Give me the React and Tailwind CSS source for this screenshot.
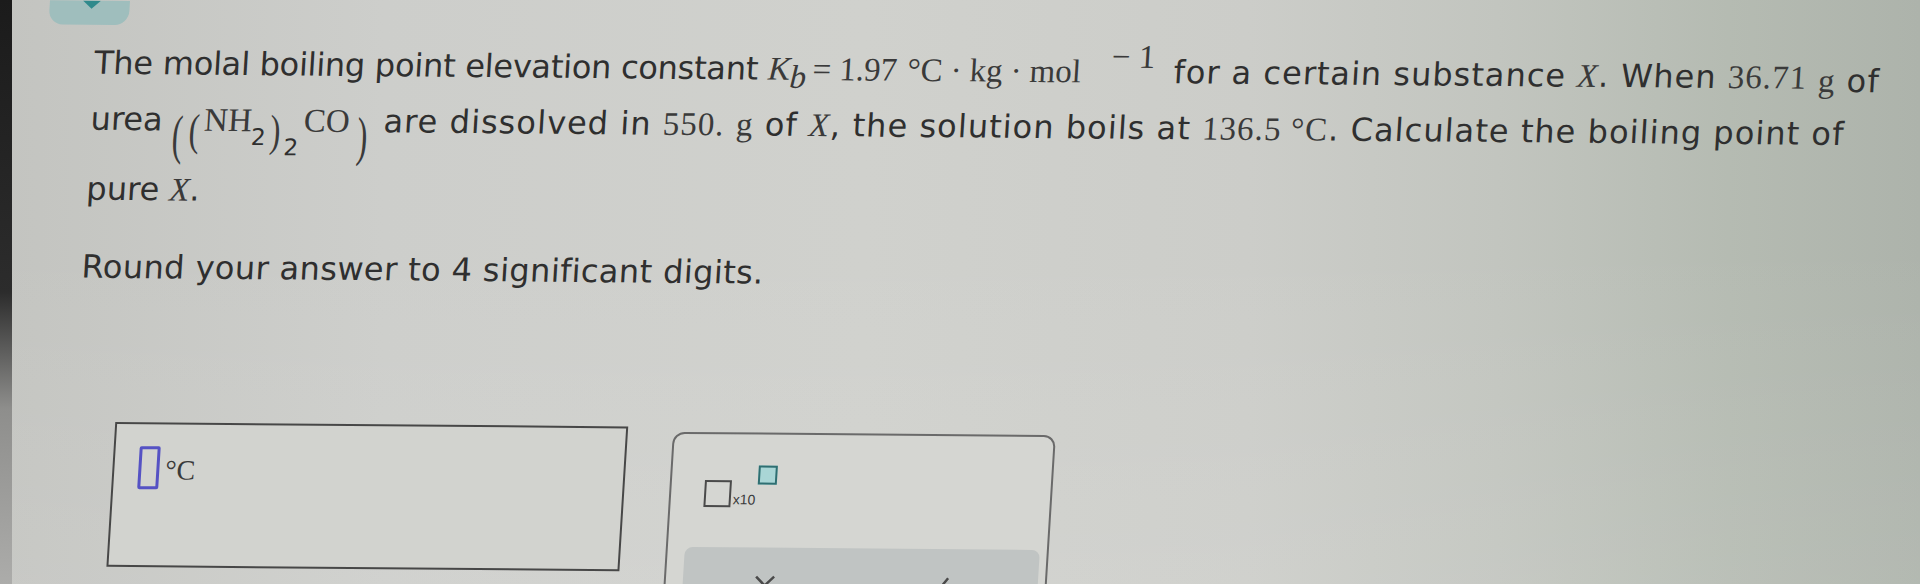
const Serif = ({ className = "", children }) => (
  <span className={`font-['Liberation_Serif',serif] text-[33px] text-[#3a3a3a] ${className}`}>{children}</span>
);

const Paren = ({ className = "", children }) => (
  <span className={`inline-block font-['Liberation_Serif',serif] text-[32px] text-[#3a3a3a] ${className}`}>{children}</span>
);

const Sub = ({ className = "", children }) => (
  <span className={`text-[23px] relative ${className}`}>{children}</span>
);

export default function App() {
  return (
    <div className="flex w-[1920px] h-[584px] overflow-hidden font-['DejaVu_Sans',sans-serif] text-[#2f2f2f] bg-[linear-gradient(180deg,rgba(255,255,255,0)_40%,rgba(255,255,255,0.08)_100%),linear-gradient(90deg,#c3c4c0_0%,#cdcecb_20%,#d0d1cd_45%,#cccdc9_65%,#c2c5bf_78%,#b5bbb2_90%,#adb3ab_100%)]">
      <div className="w-[12px] shrink-0 bg-[linear-gradient(180deg,#1b1b1b_0%,#2c2c2c_50%,#8e8e8c_70%,#acacaa_100%)]" />
      <div className="flex-1 origin-top-left rotate-[0.5deg] -skew-x-3">
        <div className="ml-[38px] w-[80px] h-[24px] rounded-b-[14px] bg-[#9fbebd] flex justify-center">
          <svg width="22" height="10" viewBox="0 0 22 10" className="ml-[4px]">
            <path d="M2 0 L11 8 L20 0 Z" fill="#2f8a8c" />
          </svg>
        </div>

        <div className="ml-[86px] mt-[18px] h-[40px] leading-[40px] text-[32px] whitespace-nowrap">
          <span className="tracking-[-0.25px]">The molal boiling point elevation constant </span>
          <Serif className="italic">K</Serif>
          <Serif className="italic text-[24px] relative top-[8px]">b</Serif>
          <Serif className="ml-[6px]">= 1.97 <span className="ml-[2px]">°C</span><span className="mx-[8px]">·</span>kg<span className="mx-[8px]">·</span>mol</Serif>
          <Serif className="text-[22px] relative -top-[15px] ml-[30px]">− 1</Serif>
          <span className="ml-[8px] tracking-[1px]">
            {" "}for a certain substance <Serif className="italic">X</Serif>. When <Serif>36.71</Serif>{" "}
            <span className="relative top-[3px]"><Serif>g</Serif> of</span>
          </span>
        </div>

        <div className="ml-[86px] mt-[16px] h-[40px] leading-[40px] text-[32px] whitespace-nowrap">
          urea{" "}
          <Paren className="scale-y-[1.7] relative top-[15px] mr-[6px]">(</Paren>
          <Paren className="scale-y-[1.4] relative top-[10px] mr-[4px]">(</Paren>
          <Serif className="text-[32px]">NH</Serif>
          <Sub className="top-[14px]">2</Sub>
          <Paren className="scale-y-[1.4] relative top-[10px] ml-[4px]">)</Paren>
          <Sub className="top-[24px] ml-[4px]">2</Sub>
          <Serif className="text-[32px] ml-[4px]">CO</Serif>
          <Paren className="scale-y-[1.7] relative top-[15px] ml-[8px] mr-[4px]">)</Paren>
          <span className="tracking-[1.05px]">
            {" "}are dissolved in <Serif>550.</Serif> <Serif>g</Serif> of <Serif className="italic">X</Serif>, the solution boils at{" "}
            <Serif>136.5 °C</Serif>. Calculate the boiling point of
          </span>
        </div>

        <div className="ml-[86px] mt-[30px] h-[40px] leading-[40px] text-[32px] whitespace-nowrap">
          pure <Serif className="italic">X</Serif>.
        </div>

        <div className="ml-[86px] mt-[38px] h-[40px] leading-[40px] text-[32px] tracking-[0.4px] whitespace-nowrap">
          Round your answer to 4 significant digits.
        </div>

        <div className="flex items-start mt-[135px]">
          <div className="ml-[129px] w-[513px] h-[145px] shrink-0 border-2 border-[#474747] bg-[#d2d3cf] pt-[22px] pl-[24px] flex items-start gap-[6px]">
            <div className="w-[21px] h-[43px] border-[3px] border-[#5552c4] rounded-[2px]" />
            <span className="font-['Liberation_Serif',serif] text-[28px] leading-none mt-[10px] text-[#3a3a3a]">°C</span>
          </div>

          <div className="ml-[45px] mt-[5px] w-[383px] h-[200px] shrink-0 border-2 border-[#6a6a6a] rounded-[12px] bg-[#d5d6d2] flex flex-col">
            <div className="flex items-end ml-[33px] mt-[43px] h-[30px] shrink-0">
              <div className="w-[27px] h-[27px] border-2 border-[#4a4a4a]" />
              <span className="text-[14px] leading-none mb-[1px] ml-[2px] font-['Liberation_Sans',sans-serif] text-[#3a3a3a]">x10</span>
              <div className="w-[19px] h-[19px] border-2 border-[#2f6f72] bg-[#a9d6d6] ml-[1px] self-start -mt-[12px]" />
            </div>
            <div className="ml-[17px] mt-[40px] w-[355px] flex-1 rounded-t-[8px] bg-[#c0c4c3] flex items-start gap-[150px] pt-[26px] pl-[70px]">
              <svg width="24" height="24" viewBox="0 0 24 24">
                <path d="M3 3 L21 21 M21 3 L3 21" stroke="#4a4a4a" strokeWidth="2.5" fill="none" />
              </svg>
              <svg width="24" height="24" viewBox="0 0 24 24">
                <path d="M3 13 L9 19 L21 3" stroke="#4a4a4a" strokeWidth="2.5" fill="none" />
              </svg>
            </div>
          </div>
        </div>
      </div>
    </div>
  );
}
